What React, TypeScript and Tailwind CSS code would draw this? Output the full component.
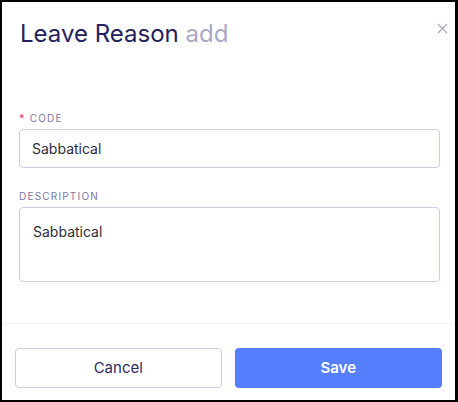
export default function App() {
  return (
    <div className="w-[458px] h-[402px] bg-black pt-[2px] pl-[2px] pr-[3px] pb-[2px] font-['Inter',sans-serif]">
      <div className="relative flex h-full w-full flex-col bg-white">
        {/* Header */}
        <div className="pl-[18px] pt-[16px]">
          <h1 className="text-[24px] leading-[32px] text-[#25215e]">
            Leave Reason <span className="text-[#aaa9c4]">add</span>
          </h1>
        </div>
        <button
          type="button"
          className="absolute right-[6px] top-[19px] flex h-[14px] w-[14px] items-center justify-center"
        >
          <svg width="11" height="11" viewBox="0 0 11 11" fill="none" stroke="#a9a8c2" strokeWidth="1.3">
            <path d="M1 1l9 9M10 1l-9 9" />
          </svg>
        </button>

        {/* Form */}
        <div className="flex flex-col pl-[17px] pr-[15px] pt-[62px]">
          <label className="flex items-center gap-[4px] text-[10px] leading-[12px] tracking-[0.12em] text-[#7a77a3]">
            <span className="text-[11px] leading-[12px] text-[#e8336d]">*</span>
            CODE
          </label>
          <div className="mt-[5px] flex h-[39px] items-center rounded-[4px] border border-[#cfcde0] px-[12px] text-[14px] text-[#2e2e38]">
            Sabbatical
          </div>
          <label className="mt-[22px] text-[10px] leading-[12px] tracking-[0.12em] text-[#7a77a3]">
            DESCRIPTION
          </label>
          <div className="mt-[5px] h-[75px] rounded-[4px] border border-[#cfcde0] px-[13px] pt-[14px] text-[14px] leading-[20px] text-[#2e2e38]">
            Sabbatical
          </div>
        </div>

        {/* Footer */}
        <div className="mt-auto border-t border-[#f2f2f6] px-[13px] pb-[12px] pt-[24px]">
          <div className="flex gap-[13px]">
            <button
              type="button"
              className="h-[40px] w-[207px] rounded-[4px] border border-[#cfcbe2] bg-white text-[15px] text-[#2f2b66]"
            >
              Cancel
            </button>
            <button
              type="button"
              className="h-[40px] w-[208px] rounded-[4px] bg-[#557ffe] text-[15px] font-semibold text-white"
            >
              Save
            </button>
          </div>
        </div>
      </div>
    </div>
  );
}
